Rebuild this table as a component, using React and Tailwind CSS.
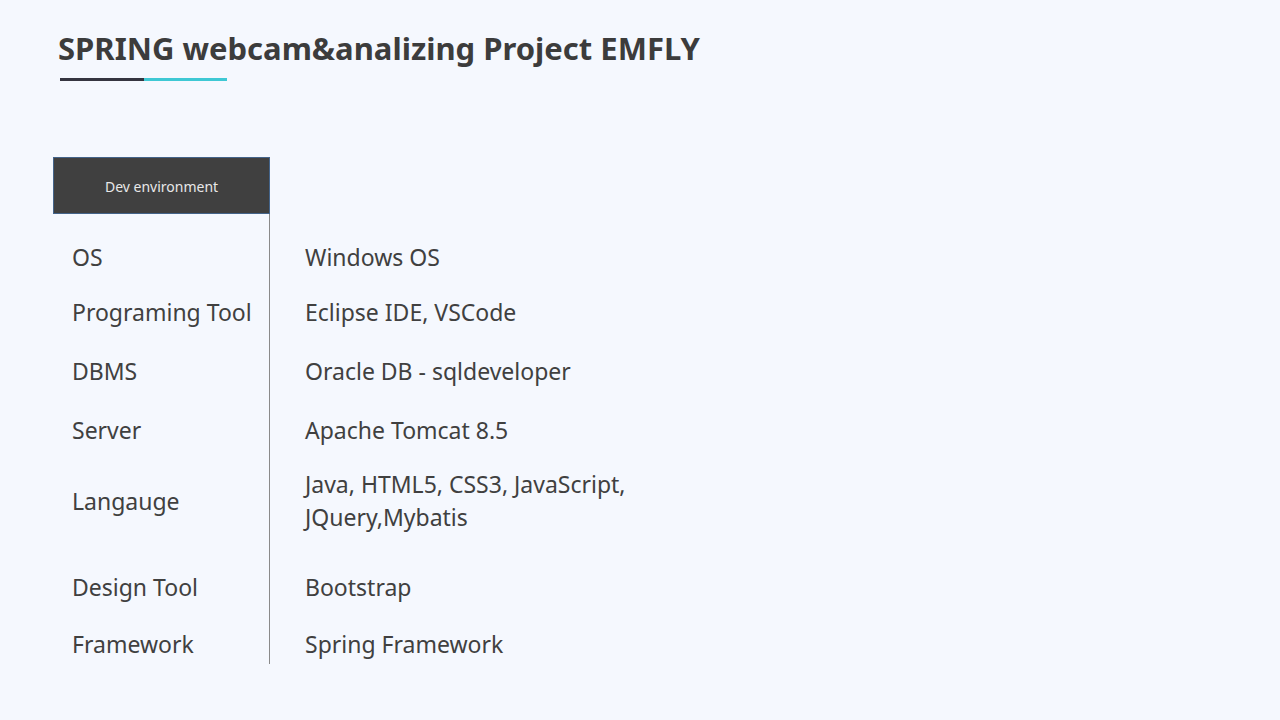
export default function App() {
  const rows = [
    { label: "OS", value: ["Windows OS"], h: "h-[54px]" },
    { label: "Programing Tool", value: ["Eclipse IDE, VSCode"], h: "h-[56px]" },
    { label: "DBMS", value: ["Oracle DB - sqldeveloper"], h: "h-[62px]" },
    { label: "Server", value: ["Apache Tomcat 8.5"], h: "h-[56px]" },
    { label: "Langauge", value: ["Java, HTML5, CSS3, JavaScript,", "JQuery,Mybatis"], h: "h-[86px]" },
    { label: "Design Tool", value: ["Bootstrap"], h: "h-[86px]" },
    { label: "Framework", value: ["Spring Framework"], h: "h-[28px]" },
  ];
  return (
    <div
      className="w-[1280px] h-[720px] bg-[#f5f8fe] text-[#404040] overflow-hidden"
      style={{ fontFamily: '"Noto Sans", "Noto Sans CJK KR", sans-serif' }}
    >
      <div className="pt-[26px] pl-[58px]">
        <h1 className="text-[31px] font-bold leading-[44px] text-[#3c3c3c]">
          SPRING webcam&amp;analizing Project EMFLY
        </h1>
      </div>
      <div className="flex ml-[60px] mt-[8px]">
        <div className="w-[84px] h-[3px] bg-[#353540]" />
        <div className="w-[83px] h-[3px] bg-[#3ec8d4]" />
      </div>
      <div className="ml-[53px] mt-[76px]">
        <div className="w-[217px] h-[57px] pt-[2px] bg-[#404040] border border-[#44648a] flex items-center justify-center text-[14px] text-[#e8e8e8]">
          Dev environment
        </div>
        <div className="w-[217px] h-[16px] border-r border-[#8a8a8a]" />
        {rows.map((r) => (
          <div key={r.label} className={`flex ${r.h}`}>
            <div className="w-[217px] shrink-0 border-r border-[#8a8a8a] flex items-center pl-[19px] text-[23px]">
              {r.label}
            </div>
            <div className="pl-[35px] flex flex-col justify-center text-[23px] leading-[33px]">
              {r.value.map((v) => (
                <div key={v}>{v}</div>
              ))}
            </div>
          </div>
        ))}
        <div className="w-[217px] h-[6px] border-r border-[#8a8a8a]" />
      </div>
    </div>
  );
}
